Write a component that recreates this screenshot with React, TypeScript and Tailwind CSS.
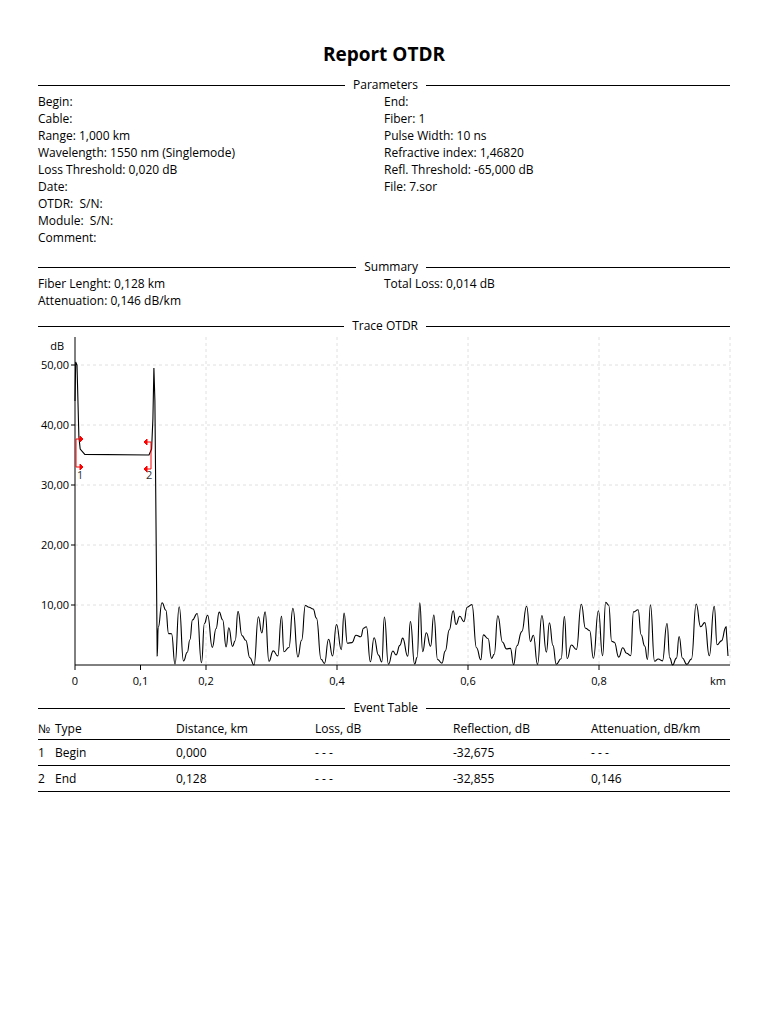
import React from "react";

function rng(seed: number) {
  let s = seed;
  return () => {
    s = (s * 1103515245 + 12345) % 2147483648;
    return s / 2147483648;
  };
}

const SectionHead = ({ title }: { title: string }) => (
  <div className="flex items-center gap-2 h-[14px]">
    <div className="flex-1 h-px bg-black" />
    <span className="text-[12px] leading-none">{title}</span>
    <div className="w-[304px] h-px bg-black" />
  </div>
);

function Chart() {
  const x0 = 75, y0 = 663;
  const X = (km: number) => x0 + km * 655;
  const Y = (db: number) => y0 - db * 6;
  const r = rng(7);
  let d = "";
  const head: [number, number][] = [
    [X(0), Y(44)], [X(0.001), Y(50.5)], [X(0.003), Y(50)], [X(0.006), Y(38)], [X(0.008), Y(36)],
    [X(0.015), Y(35.1)], [X(0.113), Y(35)], [X(0.117), Y(36)], [X(0.119), Y(41)], [X(0.1205), Y(49.5)],
    [X(0.122), Y(44)], [X(0.124), Y(20)], [X(0.1255), Y(1.5)],
  ];
  head.forEach(([a, b], i) => (d += `${i ? "L" : "M"}${a.toFixed(1)} ${b.toFixed(1)} `));
  let x = X(0.127);
  let prev = Y(1.5);
  let px = head[head.length - 1][0];
  while (x < 728) {
    const v = Math.max(0, Math.min(11, r() * 10.5 * (r() > 0.25 ? 1 : 0.5)));
    const y = Y(v);
    const mx = (px + x) / 2;
    d += `C${mx.toFixed(1)} ${prev.toFixed(1)} ${mx.toFixed(1)} ${y.toFixed(1)} ${x.toFixed(1)} ${y.toFixed(1)} `;
    prev = y;
    px = x;
    x += 2.5 + r() * 2.5;
  }
  d += `L728 ${Y(1.5)}`;
  const red = "#ff0000";
  return (
    <svg width="768" height="358" viewBox="0 332 768 358" className="block">
      {[10, 20, 30, 40, 50].map((dd) => (
        <g key={dd}>
          <line x1={x0} x2={730} y1={Y(dd)} y2={Y(dd)} stroke="#d8d8d8" strokeDasharray="3 3" strokeWidth={0.8} />
          <line x1={71} x2={75} y1={Y(dd)} y2={Y(dd)} stroke="#000" />
          <text x={69} y={Y(dd) + 4} textAnchor="end" fontSize={11}>{`${dd},00`}</text>
        </g>
      ))}
      {[0.2, 0.4, 0.6, 0.8, 1].map((k) => (
        <line key={k} x1={X(k)} x2={X(k)} y1={335} y2={y0} stroke="#d8d8d8" strokeDasharray="3 3" strokeWidth={0.8} />
      ))}
      <text x={64} y={348} textAnchor="end" fontSize={11}>dB</text>
      <line x1={x0} x2={x0} y1={335} y2={y0} stroke="#000" />
      <line x1={x0} x2={730} y1={y0} y2={y0} stroke="#000" />
      {[0, 0.1, 0.2, 0.4, 0.6, 0.8].map((k) => (
        <g key={k}>
          <line x1={X(k)} x2={X(k)} y1={y0} y2={y0 + 5} stroke="#000" />
          <text x={X(k)} y={y0 + 20} textAnchor="middle" fontSize={11}>{String(k).replace(".", ",")}</text>
        </g>
      ))}
      <text x={718} y={y0 + 20} textAnchor="middle" fontSize={11}>km</text>
      <path d={d} fill="none" stroke="#000" strokeWidth={1.1} />
      <g stroke={red} strokeWidth={1} fill={red}>
        <line x1={76} x2={76} y1={437} y2={465} />
        <line x1={76} x2={80} y1={437} y2={437} />
        <line x1={76} x2={80} y1={465} y2={465} />
        <path d="M80 434 L83 437 L80 440 Z" />
        <path d="M80 462 L83 465 L80 468 Z" />
        <line x1={151} x2={151} y1={440} y2={467} />
        <line x1={147} x2={151} y1={440} y2={440} />
        <line x1={147} x2={151} y1={467} y2={467} />
        <path d="M147 437 L144 440 L147 443 Z" />
        <path d="M147 464 L144 467 L147 470 Z" />
      </g>
      <text x={77} y={477} fontSize={11} fill="#333">1</text>
      <text x={146} y={477} fontSize={11} fill="#333">2</text>
    </svg>
  );
}

export default function App() {
  const left = ["Begin:", "Cable:", "Range: 1,000 km", "Wavelength: 1550 nm (Singlemode)", "Loss Threshold: 0,020 dB", "Date:", "OTDR:  S/N:", "Module:  S/N:", "Comment:"];
  const right = ["End:", "Fiber: 1", "Pulse Width: 10 ns", "Refractive index: 1,46820", "Refl. Threshold: -65,000 dB", "File: 7.sor"];
  const rows = [
    ["1", "Begin", "0,000", "- - -", "-32,675", "- - -"],
    ["2", "End", "0,128", "- - -", "-32,855", "0,146"],
  ];
  return (
    <div className="w-[768px] h-[1024px] bg-white text-black text-[12px] leading-[17px]" style={{ fontFamily: '"Open Sans", "Noto Sans", sans-serif' }}>
      <div className="pt-[40px] text-center font-bold text-[19px] leading-[28px]">Report OTDR</div>
      <div className="px-[38px] pt-[10px]">
        <SectionHead title="Parameters" />
        <div className="flex pt-[1px]">
          <div className="w-[346px]">{left.map((t) => <div key={t} className="whitespace-pre">{t}</div>)}</div>
          <div>{right.map((t) => <div key={t}>{t}</div>)}</div>
        </div>
        <div className="pt-[14px]"><SectionHead title="Summary" /></div>
        <div className="flex pt-[1px]">
          <div className="w-[346px]"><div>Fiber Lenght: 0,128 km</div><div>Attenuation: 0,146 dB/km</div></div>
          <div>Total Loss: 0,014 dB</div>
        </div>
        <div className="pt-[10px]"><SectionHead title="Trace OTDR" /></div>
      </div>
      <div className="mt-[1px]"><Chart /></div>
      <div className="px-[38px] pt-[9px]">
        <SectionHead title="Event Table" />
        <div className="mt-[2px]">
          <div className="flex h-[23px] items-center border-b border-black">
            <div className="w-[17px]">№</div>
            <div className="w-[121px]">Type</div>
            <div className="w-[139px]">Distance, km</div>
            <div className="w-[138px]">Loss, dB</div>
            <div className="w-[138px]">Reflection, dB</div>
            <div className="flex-1">Attenuation, dB/km</div>
          </div>
          {rows.map((r) => (
            <div key={r[0]} className="flex h-[26px] items-center border-b border-black">
              <div className="w-[17px]">{r[0]}</div>
              <div className="w-[121px]">{r[1]}</div>
              <div className="w-[139px]">{r[2]}</div>
              <div className="w-[138px]">{r[3]}</div>
              <div className="w-[138px]">{r[4]}</div>
              <div className="flex-1">{r[5]}</div>
            </div>
          ))}
        </div>
      </div>
    </div>
  );
}
